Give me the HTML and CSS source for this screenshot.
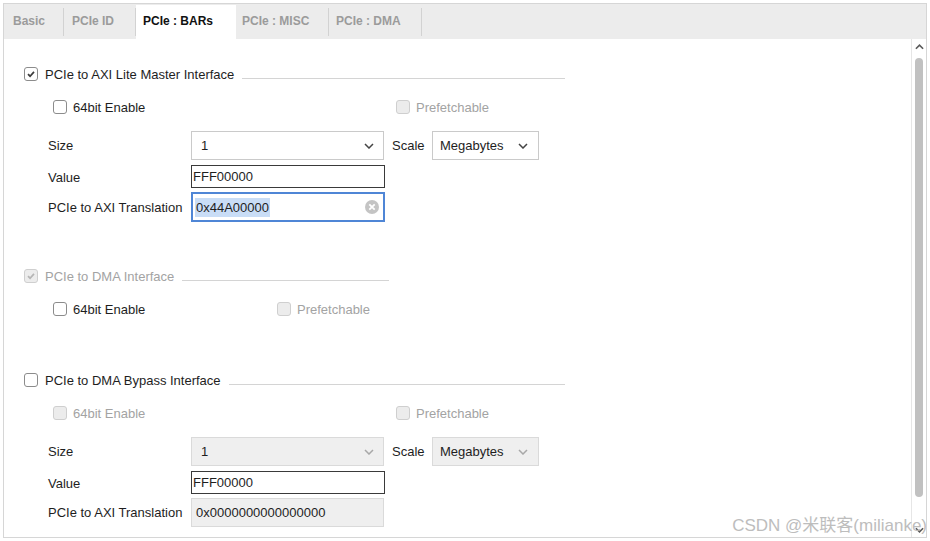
FILE: index.html
```html
<!DOCTYPE html>
<html lang="en">
<head>
  <meta charset="UTF-8" />
  <title>PCIe : BARs</title>
  <link rel="stylesheet" href="styles.css">
</head>
<body>
  <div class="window">
    <div class="tab-bar">
      <div class="tab tab-basic">Basic</div>
      <span class="tab-sep"></span>
      <div class="tab tab-id">PCIe ID</div>
      <span class="tab-sep"></span>
      <div class="tab tab-bars active">PCIe : BARs</div>
      <div class="tab tab-misc">PCIe : MISC</div>
      <span class="tab-sep"></span>
      <div class="tab tab-dma">PCIe : DMA</div>
      <span class="tab-sep"></span>
    </div>

    <div class="content">
      <div class="form">

        <!-- AXI Lite master -->
        <div class="section-head">
          <span class="check checked"><svg viewBox="0 0 14 14"><path d="M3.5 7.2l2.4 2.4 4.6-5" /></svg></span>
          <span class="head-label">PCIe to AXI Lite Master Interface</span>
          <span class="head-line"></span>
        </div>
        <div class="opts">
          <div class="opt opt-first"><span class="check"></span><span>64bit Enable</span></div>
          <div class="opt disabled"><span class="check"></span><span>Prefetchable</span></div>
        </div>
        <div class="field-row row-size">
          <span class="field-label">Size</span>
          <div class="combo combo-size"><span>1</span><svg class="chev" viewBox="0 0 10 6"><path d="M1 1l4 4 4-4" /></svg></div>
          <span class="scale-label">Scale</span>
          <div class="combo combo-scale"><span>Megabytes</span><svg class="chev" viewBox="0 0 10 6"><path d="M1 1l4 4 4-4" /></svg></div>
        </div>
        <div class="field-row row-value">
          <span class="field-label">Value</span>
          <div class="input input-value">FFF00000</div>
        </div>
        <div class="field-row row-trans">
          <span class="field-label">PCIe to AXI Translation</span>
          <div class="input input-focus">
            <span class="selected-text">0x44A00000</span>
            <svg class="clear" viewBox="0 0 16 16"><circle cx="8" cy="8" r="7" /><path d="M5.3 5.3l5.4 5.4M10.7 5.3l-5.4 5.4" /></svg>
          </div>
        </div>

        <!-- DMA -->
        <div class="section-head head-dma disabled">
          <span class="check checked"><svg viewBox="0 0 14 14"><path d="M3.5 7.2l2.4 2.4 4.6-5" /></svg></span>
          <span class="head-label">PCIe to DMA Interface</span>
          <span class="head-line"></span>
        </div>
        <div class="opts">
          <div class="opt opt-first opt-short"><span class="check"></span><span>64bit Enable</span></div>
          <div class="opt disabled"><span class="check"></span><span>Prefetchable</span></div>
        </div>

        <!-- DMA bypass -->
        <div class="section-head head-bypass">
          <span class="check"></span>
          <span class="head-label">PCIe to DMA Bypass Interface</span>
          <span class="head-line"></span>
        </div>
        <div class="opts">
          <div class="opt opt-first disabled"><span class="check"></span><span>64bit Enable</span></div>
          <div class="opt disabled"><span class="check"></span><span>Prefetchable</span></div>
        </div>
        <div class="field-row row-size">
          <span class="field-label">Size</span>
          <div class="combo combo-size off"><span>1</span><svg class="chev" viewBox="0 0 10 6"><path d="M1 1l4 4 4-4" /></svg></div>
          <span class="scale-label">Scale</span>
          <div class="combo combo-scale off"><span>Megabytes</span><svg class="chev" viewBox="0 0 10 6"><path d="M1 1l4 4 4-4" /></svg></div>
        </div>
        <div class="field-row row-value">
          <span class="field-label">Value</span>
          <div class="input input-value">FFF00000</div>
        </div>
        <div class="field-row row-trans">
          <span class="field-label">PCIe to AXI Translation</span>
          <div class="input input-off">0x0000000000000000</div>
        </div>

      </div>

      <div class="scrollbar">
        <svg class="arrow" viewBox="0 0 10 6"><path d="M1 5l4-4 4 4" /></svg>
        <div class="thumb"></div>
        <svg class="arrow" viewBox="0 0 10 6"><path d="M1 1l4 4 4-4" /></svg>
      </div>
    </div>

    <div class="watermark">CSDN @米联客(milianke)</div>
  </div>
</body>
</html>
```

FILE: styles.css
```css
body {
  margin: 0;
  background: #ffffff;
  font-family: "Liberation Sans", Arial, "Noto Sans CJK SC", sans-serif;
  font-size: 13px;
  color: #1e1e1e;
}

.window {
  position: relative;
  margin: 3px 0 0 3px;
  width: 922px;
  height: 533px;
  border: 1px solid #d6d6d6;
  display: flex;
  flex-direction: column;
  overflow: hidden;
}

/* tabs */
.tab-bar {
  display: flex;
  align-items: center;
  height: 35px;
  background: #ececec;
  flex-shrink: 0;
  font-size: 12px;
}

.tab {
  height: 35px;
  line-height: 35px;
  box-sizing: border-box;
  padding-left: 9px;
  font-weight: bold;
  color: #9b9b9b;
}

.tab-basic { width: 59px; }
.tab-id { width: 71px; padding-left: 8px; }
.tab-bars { width: 100px; padding-left: 7px; }
.tab-misc { width: 92px; padding-left: 6px; }
.tab-dma { width: 92px; padding-left: 7px; }

.tab.active {
  background: #ffffff;
  color: #111111;
  height: 34px;
  margin-top: 1px;
  line-height: 33px;
}

.tab-sep {
  width: 1px;
  height: 28px;
  background: #d2d2d2;
}

/* content */
.content {
  flex: 1;
  display: flex;
  background: #ffffff;
  min-height: 0;
}

.form {
  flex: 1;
  padding: 25px 0 0 20px;
}

.check {
  display: inline-flex;
  align-items: center;
  justify-content: center;
  width: 12px;
  height: 12px;
  border: 1px solid #8c8c8c;
  border-radius: 3px;
  background: #ffffff;
  flex-shrink: 0;
}

.check svg {
  width: 12px;
  height: 12px;
  fill: none;
  stroke: #3c3c3c;
  stroke-width: 2;
}

.disabled .check {
  border-color: #cfcfcf;
  background: #ececec;
}

.disabled .check svg {
  stroke: #b5b5b5;
}

.section-head {
  display: flex;
  align-items: center;
  height: 20px;
  width: 541px;
}

.section-head .check {
  margin-right: 7px;
}

.head-line {
  flex: 1;
  height: 1px;
  background: #d4d4d4;
  margin: 9px 0 0 8px;
}

.head-dma {
  width: 365px;
  margin-top: 44px;
  color: #a3a3a3;
}

.head-bypass {
  margin-top: 51px;
}

.opts {
  display: flex;
  align-items: center;
  height: 20px;
  margin: 13px 0 0 29px;
}

.opt {
  display: flex;
  align-items: center;
  gap: 6px;
}

.opt-first { width: 343px; }
.opt-short { width: 224px; }

.opt.disabled {
  color: #a3a3a3;
}

.field-row {
  display: flex;
  align-items: center;
  margin-left: 24px;
}

.field-label {
  width: 143px;
  flex-shrink: 0;
}

.row-size {
  height: 29px;
  margin-top: 14px;
}

.row-value {
  margin-top: 5px;
}

.row-value .field-label {
  padding-top: 2px;
}

.row-trans {
  margin-top: 4px;
}

.combo {
  display: flex;
  align-items: center;
  justify-content: space-between;
  box-sizing: border-box;
  height: 29px;
  border: 1px solid #cacaca;
  background: #ffffff;
  padding: 0 9px 0 9px;
}

.combo-size { width: 193px; }

.combo-scale {
  width: 107px;
  padding-left: 7px;
  padding-right: 10px;
}

.chev {
  width: 10px;
  height: 6px;
  fill: none;
  stroke: #444444;
  stroke-width: 1.5;
}

.combo.off {
  background: #efefef;
  border-color: #dadada;
}

.combo.off .chev {
  stroke: #a8a8a8;
}

.scale-label {
  width: 40px;
  margin-left: 8px;
}

.input {
  display: flex;
  align-items: center;
  box-sizing: border-box;
  width: 194px;
  height: 23px;
  border: 1px solid #3a3a3a;
  background: #ffffff;
  padding-left: 1px;
}

.input-focus {
  height: 30px;
  border: 2px solid #4f86d6;
  padding: 0 3px 0 2px;
  justify-content: space-between;
}

.selected-text {
  background: #c9ddf6;
  padding: 2px 1px;
}

.clear {
  width: 16px;
  height: 16px;
}

.clear circle {
  fill: #c4c4c4;
}

.clear path {
  stroke: #ffffff;
  stroke-width: 1.8;
}

.input-off {
  width: 193px;
  height: 29px;
  background: #efefef;
  border-color: #dadada;
  padding-left: 4px;
}

/* scrollbar */
.scrollbar {
  width: 14px;
  border-left: 1px solid #e6e6e6;
  display: flex;
  flex-direction: column;
  align-items: center;
  padding-top: 5px;
}

.arrow {
  width: 9px;
  height: 6px;
  fill: none;
  stroke: #5a5a5a;
  stroke-width: 1.8;
}

.thumb {
  width: 8px;
  height: 439px;
  margin: 8px 0 30px;
  border-radius: 4px;
  background: #c1c1c1;
}

.watermark {
  position: absolute;
  right: -1px;
  bottom: 1px;
  font-size: 17px;
  color: #bdbdbd;
}
```
